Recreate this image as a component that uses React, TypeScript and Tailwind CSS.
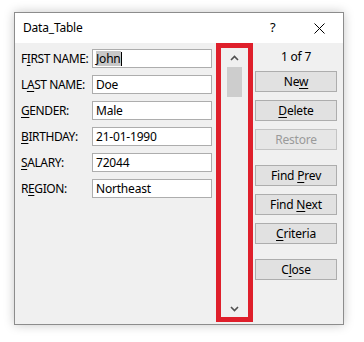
import React from "react";

const fields = [
  { pre: "F", key: "I", post: "RST NAME:", value: "John", selected: true },
  { pre: "L", key: "A", post: "ST NAME:", value: "Doe" },
  { pre: "", key: "G", post: "ENDER:", value: "Male" },
  { pre: "", key: "B", post: "IRTHDAY:", value: "21-01-1990" },
  { pre: "", key: "S", post: "ALARY:", value: "72044" },
  { pre: "R", key: "E", post: "GION:", value: "Northeast" },
];

type Btn = { pre: string; key?: string; post?: string; disabled?: boolean; gap?: boolean };

const buttons: Btn[] = [
  { pre: "Ne", key: "w" },
  { pre: "", key: "D", post: "elete" },
  { pre: "Restore", disabled: true },
  { pre: "Find ", key: "P", post: "rev", gap: true },
  { pre: "Find ", key: "N", post: "ext" },
  { pre: "", key: "C", post: "riteria" },
  { pre: "C", key: "l", post: "ose", gap: true },
];

function Chevron({ down }: { down?: boolean }) {
  return (
    <svg width="9" height="6" viewBox="0 0 9 6" className={down ? "rotate-180" : ""}>
      <path d="M1 5 L4.5 1.5 L8 5" fill="none" stroke="#505050" strokeWidth="1.6" />
    </svg>
  );
}

export default function App() {
  return (
    <div className="w-[364px] h-[342px] bg-white pt-[12px] pl-[14px]" style={{ fontFamily: "'Noto Sans', sans-serif" }}>
      <div className="w-[330px] h-[313px] border border-[#8c8c8c] bg-[#f0f0f0] shadow-[0_0_10px_rgba(0,0,0,0.22)] flex flex-col text-[12px] text-black">
        {/* title bar */}
        <div className="h-[30px] bg-white flex items-center pl-[8px] shrink-0">
          <span className="flex-1 tracking-[-0.2px]">Data_Table</span>
          <span className="w-[10px] text-[13px] mr-[34px]">?</span>
          <svg width="11" height="11" viewBox="0 0 11 11" className="mr-[18px]">
            <path d="M0.5 0.5 L10.5 10.5 M10.5 0.5 L0.5 10.5" stroke="#000" strokeWidth="1" />
          </svg>
        </div>

        <div className="flex pl-[6px]">
          {/* fields */}
          <div className="flex flex-col gap-[7px] pt-[6px]">
            {fields.map((f) => (
              <div key={f.value} className="flex items-center h-[19px]">
                <span className="w-[71px] whitespace-nowrap tracking-[-0.4px]">
                  {f.pre}
                  <span className="underline underline-offset-2">{f.key}</span>
                  {f.post}
                </span>
                <div className="w-[120px] h-[19px] bg-white border border-[#adadad] flex items-center pl-[3px] tracking-[-0.2px]">
                  {f.selected ? (
                    <>
                      <span className="bg-[#c8c8c8] leading-[15px]">{f.value}</span>
                      <span className="w-px h-[14px] bg-black" />
                    </>
                  ) : (
                    <span>{f.value}</span>
                  )}
                </div>
              </div>
            ))}
          </div>

          {/* highlighted scrollbar */}
          <div className="ml-[4px] w-[37px] h-[279px] border-[5px] border-[#df1f2b] bg-[#f0f0f0] flex flex-col items-center">
            <div className="h-[18px] flex items-center justify-center pt-[2px]">
              <Chevron />
            </div>
            <div className="w-[15px] h-[30px] bg-[#cdcdcd] mt-[1px]" />
            <div className="flex-1" />
            <div className="h-[16px] flex items-center justify-center">
              <Chevron down />
            </div>
          </div>

          {/* buttons */}
          <div className="ml-[2px] w-[82px] flex flex-col pt-[5px] tracking-[-0.2px]">
            <div className="h-[18px] leading-[18px] text-center">1 of 7</div>
            <div className="flex flex-col gap-[8px] mt-[5px]">
              {buttons.map((b) => (
                <div
                  key={b.pre + (b.post ?? "")}
                  className={
                    "h-[21px] flex items-center justify-center border " +
                    (b.disabled ? "bg-[#e6e6e6] border-[#c4c4c4] text-[#9a9a9a]" : "bg-[#e1e1e1] border-[#adadad]") +
                    (b.gap ? " mt-[7px]" : "")
                  }
                >
                  <span className="whitespace-pre">
                    {b.pre}
                    {b.key && <span className="underline underline-offset-2">{b.key}</span>}
                    {b.post}
                  </span>
                </div>
              ))}
            </div>
          </div>
        </div>
      </div>
    </div>
  );
}
